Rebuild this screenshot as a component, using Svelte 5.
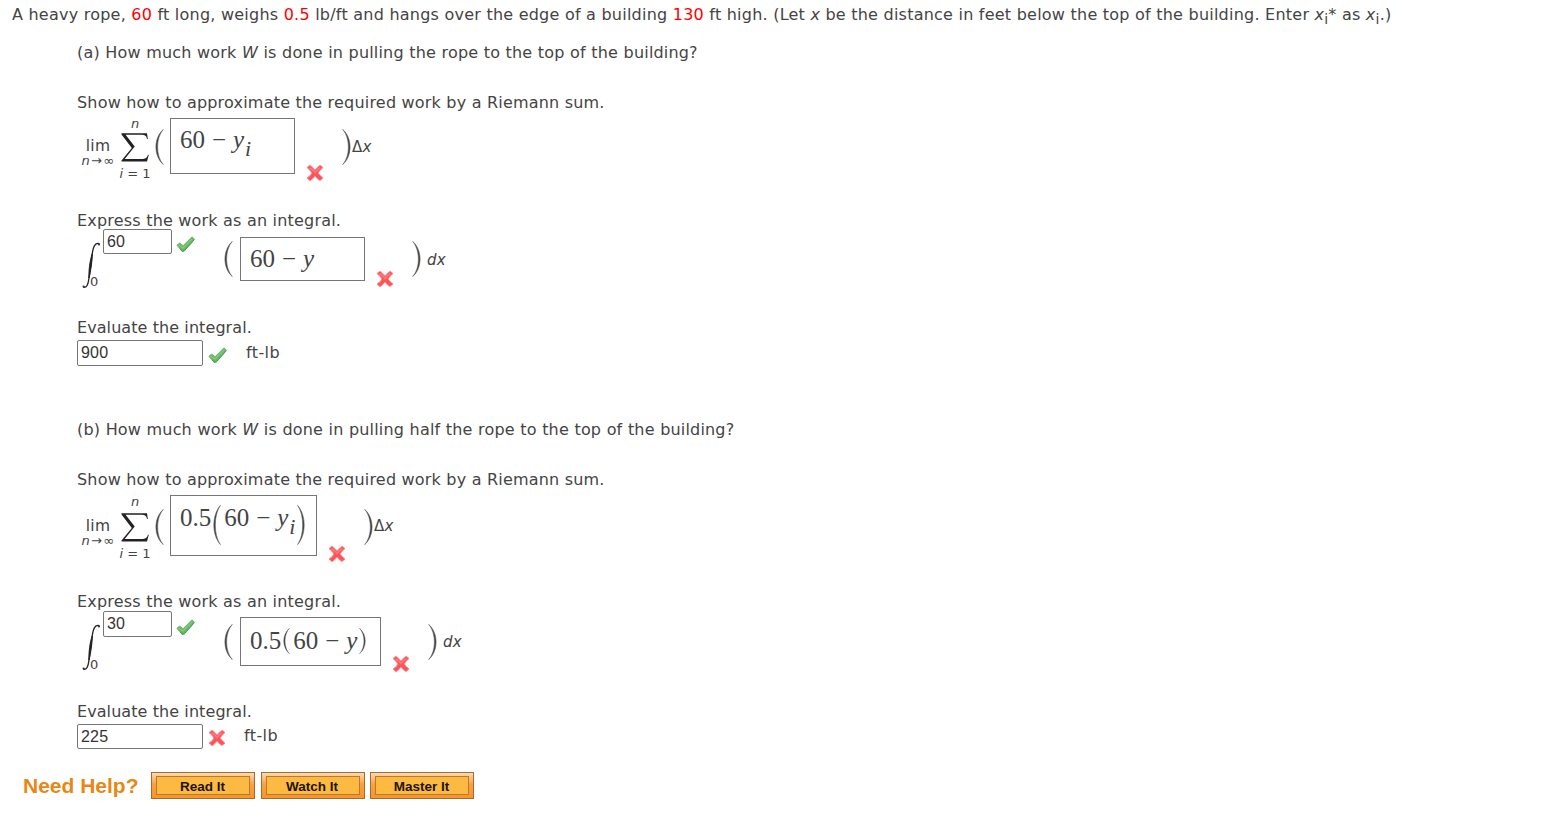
<script>
  const helpLinks = ['Read It', 'Watch It', 'Master It']

  let upperA = $state('60')
  let workA = $state('900')
  let upperB = $state('30')
  let workB = $state('225')
</script>

{#snippet check()}
  <svg class="check" width="20" height="17" viewBox="0 0 20 17" role="img" aria-label="Correct">
    <path d="M0.9 9.2 L3.8 7 L7 9.8 L15.9 0.9 L18.6 3.2 L8.4 15 L6 15.4 Z" fill="#68b966" stroke="#5fae5d" stroke-width="0.8" stroke-linejoin="round" />
    <path d="M2.6 9 L7 12 L16.2 2.8" fill="none" stroke="#85cb7d" stroke-width="1.2" />
    <path d="M4.2 13.2 L6.8 15.3 L8.4 14.6 L18.2 3.8" fill="none" stroke="#4b9450" stroke-width="0.9" />
  </svg>
{/snippet}

{#snippet cross()}
  <svg class="cross" width="18" height="18" viewBox="0 0 18 18" role="img" aria-label="Incorrect">
    <path d="M1 3.6 L3.8 1.2 Q7 3 9 6 Q11 3 14.2 1.2 L17 3.6 Q14 6 12 9 Q14 11.5 17 14 L14 16.6 Q11 15 9 12 Q7 15 4 16.8 L1 14 Q4.4 12 6 9 Q4 6 1 3.6 Z" fill="#fb5459" stroke="#fc8a8c" stroke-width="0.9" stroke-linejoin="round" />
    <path d="M3.6 3.6 Q7 5.6 9 8.4 Q11 5.6 14.2 3.6" fill="none" stroke="#ff7678" stroke-width="1.8" />
  </svg>
{/snippet}

{#snippet paren(side, height, width)}
  <svg class="paren" {width} {height} viewBox="0 0 9 36" preserveAspectRatio="none" aria-label={side === 'left' ? '(' : ')'}>
    <path
      d="M8.4 0.3 C-1.6 9 -1.6 27 8.4 35.7 C0.7 27 0.7 9 8.4 0.3 Z"
      transform={side === 'left' ? undefined : 'translate(9 0) scale(-1 1)'}
      fill="#444"
      stroke="#555"
      stroke-width="0.5"
    />
  </svg>
{/snippet}

{#snippet limitSum()}
  <div class="limit">
    <span class="lim">lim</span>
    <span class="under"><i>n</i>→∞</span>
  </div>
  <div class="sum">
    <span class="top"><i>n</i></span>
    <svg width="28" height="29" viewBox="0 0 28 29" aria-label="sum">
      <path d="M0.5 0.3 H26 L26.8 6 H26 C25.5 2.8 24 1.7 20 1.7 H4.6 L13.7 13.5 L3.7 26 H20.5 C24.5 26 26 24.8 27 21.8 H27.8 L26 28.5 H0.5 V27.5 L10.8 15 L0.5 1.6 Z" fill="#222" />
    </svg>
    <span class="bottom"><i>i</i> = 1</span>
  </div>
{/snippet}

{#snippet integralSign()}
  <svg class="integral-sign" width="19" height="47" viewBox="0 0 19 47" aria-label="integral">
    <path d="M1.3 45 C5 46.5 6.2 42 7 36 L10.2 12 C11.2 4.5 13 0.5 17.3 1.6" fill="none" stroke="#222" stroke-width="1.3" />
    <path d="M7 36 C8.6 30 10.4 18 10.2 12 C8 18 6.6 28 7 36 Z" fill="#222" stroke="#222" />
    <circle cx="17" cy="2.4" r="1.1" fill="#333" />
    <circle cx="1.6" cy="44.6" r="1.1" fill="#333" />
  </svg>
{/snippet}

<main>
  <p class="intro">
    A heavy rope, <b>60</b> ft long, weighs <b>0.5</b> lb/ft and hangs over the edge of a building <b>130</b> ft high. (Let <i>x</i> be the distance in feet below the top of the building. Enter <i>x</i><span class="sub">i</span>* as <i>x</i><span class="sub">i</span>.)
  </p>

  <section class="part-a">
    <p class="question">(a) How much work <i>W</i> is done in pulling the rope to the top of the building?</p>

    <p class="riemann">Show how to approximate the required work by a Riemann sum.</p>
    <div class="row sum-row">
      {@render limitSum()}
      {@render paren('left', 36, 9)}
      <div class="answer">
        <span>60</span><span class="minus">−</span><i>y</i><i class="index">i</i>
      </div>
      {@render cross()}
      {@render paren('right', 36, 9)}
      <span class="delta">Δ<i>x</i></span>
    </div>

    <p>Express the work as an integral.</p>
    <div class="row integral-row">
      {@render integralSign()}
      <span class="lower">0</span>
      <input class="bound" aria-label="Upper bound" bind:value={upperA} />
      {@render check()}
      {@render paren('left', 36, 9)}
      <div class="answer">
        <span>60</span><span class="minus">−</span><i>y</i>
      </div>
      {@render cross()}
      {@render paren('right', 36, 9)}
      <i class="dx">dx</i>
    </div>

    <p class="evaluate">Evaluate the integral.</p>
    <div class="row result">
      <input aria-label="Work" bind:value={workA} />
      {@render check()}
      <span class="unit">ft-lb</span>
    </div>
  </section>

  <section class="part-b">
    <p class="question">(b) How much work <i>W</i> is done in pulling half the rope to the top of the building?</p>

    <p class="riemann">Show how to approximate the required work by a Riemann sum.</p>
    <div class="row sum-row">
      {@render limitSum()}
      {@render paren('left', 36, 9)}
      <div class="answer">
        <span>0.5</span>{@render paren('left', 40, 8)}<span>60</span><span class="minus">−</span><i>y</i><i class="index">i</i>{@render paren('right', 40, 8)}
      </div>
      {@render cross()}
      {@render paren('right', 36, 9)}
      <span class="delta">Δ<i>x</i></span>
    </div>

    <p>Express the work as an integral.</p>
    <div class="row integral-row">
      {@render integralSign()}
      <span class="lower">0</span>
      <input class="bound" aria-label="Upper bound" bind:value={upperB} />
      {@render check()}
      {@render paren('left', 36, 9)}
      <div class="answer">
        <span>0.5</span>{@render paren('left', 26, 7)}<span>60</span><span class="minus">−</span><i>y</i>{@render paren('right', 26, 7)}
      </div>
      {@render cross()}
      {@render paren('right', 36, 9)}
      <i class="dx">dx</i>
    </div>

    <p class="evaluate">Evaluate the integral.</p>
    <div class="row result">
      <input aria-label="Work" bind:value={workB} />
      {@render cross()}
      <span class="unit">ft-lb</span>
    </div>
  </section>

  <footer>
    <strong>Need Help?</strong>
    {#each helpLinks as label}
      <button><span>{label}</span></button>
    {/each}
  </footer>
</main>

<style>
  :global(body) {
    margin: 0;
    background: #fff;
  }

  main {
    box-sizing: border-box;
    height: 821px;
    padding-top: 2px;
    overflow: hidden;
    color: #444;
    font: 16px/24px Verdana, 'DejaVu Sans', sans-serif;
    white-space: nowrap;
  }

  p {
    margin: 0;
    height: 24px;
    letter-spacing: 0.2px;
    line-height: 26px;
  }

  .intro {
    padding-left: 12px;
    letter-spacing: 0.233px;
  }

  .intro b {
    color: #f00;
    font-weight: normal;
  }

  .sub {
    position: relative;
    top: 4px;
    font-size: 14px;
    line-height: 1;
  }

  section {
    box-sizing: border-box;
    padding-left: 77px;
  }

  .part-a {
    height: 391px;
    padding-top: 14px;
  }

  .part-b {
    height: 355px;
  }

  .question {
    letter-spacing: 0.18px;
    word-spacing: 0.2px;
  }

  .riemann {
    margin-top: 26px;
  }

  .evaluate {
    letter-spacing: 0.08px;
  }

  .row {
    display: flex;
    align-items: center;
  }

  .row svg {
    display: block;
    flex: none;
  }

  .answer {
    box-sizing: border-box;
    display: flex;
    align-items: center;
    flex: none;
    border: 1px solid #767676;
    padding-left: 9px;
    color: #444;
    font: 25px/30px 'Liberation Serif', serif;
  }

  .minus {
    width: 15px;
    margin: 0 6px 0 7px;
  }

  .index {
    position: relative;
    top: 9px;
    margin-left: 1px;
    font-size: 22px;
  }

  .sum-row {
    height: 56px;
    margin: 4px 0 34px;
  }

  .part-b .sum-row {
    height: 61px;
    margin-bottom: 33px;
  }

  .sum-row > .paren {
    margin-top: 2px;
  }

  .limit {
    display: flex;
    flex-direction: column;
    align-items: center;
    width: 38px;
    margin: 12px 0 0 2px;
  }

  .lim {
    font-size: 15.5px;
    letter-spacing: 0.3px;
    line-height: 18px;
  }

  .under {
    margin-right: -1px;
    font-size: 13px;
    letter-spacing: 1.3px;
    line-height: 12px;
  }

  .sum {
    display: flex;
    flex-direction: column;
    align-items: center;
    width: 34px;
    margin: 1px 3px 0 1px;
    font-size: 13px;
  }

  .sum .top {
    height: 18px;
    line-height: 17px;
  }

  .part-b .sum .top {
    line-height: 14px;
  }

  .sum .bottom {
    height: 16px;
    line-height: 24px;
  }

  .sum-row .answer {
    align-self: stretch;
    width: 125px;
    margin-left: 6px;
    padding-bottom: 12px;
  }

  .part-b .sum-row .answer {
    width: 147px;
    padding-bottom: 15px;
  }

  .part-b .sum-row .answer .paren {
    margin: 14px 3px 0 2px;
  }

  .part-b .integral-row .answer .paren {
    margin: 0 3px 0 2px;
  }

  .row > .cross {
    align-self: flex-end;
    margin: 0 18px -8px 11px;
  }

  .part-b .sum-row > .cross,
  .integral-row > .cross {
    margin-bottom: -7px;
  }

  .delta,
  .dx {
    padding-top: 1px;
    font-size: 15px;
    letter-spacing: 0.2px;
  }

  .delta {
    margin-left: 1px;
  }

  .dx {
    margin-left: 6px;
  }

  .integral-row {
    height: 44px;
    margin: 5px 0 34px;
  }

  .part-b .integral-row {
    height: 49px;
    margin: 4px 0 33px;
  }

  .integral-sign {
    margin: 12px 0 0 5px;
  }

  .lower {
    width: 9px;
    margin: 46px 0 0 -11px;
    font-size: 13px;
  }

  input {
    box-sizing: border-box;
    width: 126px;
    height: 26px;
    border: 1px solid #767676;
    border-radius: 2px;
    padding: 0 3px;
    color: #333;
    font: 16px 'Liberation Sans', Arial, sans-serif;
    letter-spacing: 0.2px;
    outline: none;
  }

  .bound {
    width: 69px;
    height: 25px;
    margin: -35px 0 0 4px;
  }

  .part-b .bound {
    height: 26px;
  }

  .integral-row > .check {
    margin: -29px 28px 0 4px;
  }

  .integral-row .answer {
    align-self: stretch;
    width: 125px;
    margin-left: 7px;
  }

  .part-b .integral-row .answer {
    width: 141px;
    padding-bottom: 2px;
  }

  .result {
    margin-top: 1px;
  }

  .part-b .result {
    margin-top: 0;
  }

  .part-b .result input {
    height: 25px;
    margin-top: 1px;
  }

  .result .check {
    margin: 4px 18px 0 5px;
  }

  .row.result > .cross {
    align-self: center;
    margin: 4px 18px 0 5px;
  }

  .unit {
    letter-spacing: 0.4px;
  }

  footer {
    display: flex;
    align-items: center;
    height: 27px;
    padding-left: 23px;
  }

  footer strong {
    width: 128px;
    margin-top: -1px;
    color: #e88714;
    font: bold 21px/27px 'Liberation Sans', Arial, sans-serif;
  }

  button {
    box-sizing: border-box;
    width: 104px;
    height: 27px;
    margin-right: 5.5px;
    padding: 3px 4px;
    border: 1px solid #a66b31;
    background: linear-gradient(#fbd9ae, #f9a044 45%, #f7942d);
  }

  button span {
    box-sizing: border-box;
    display: block;
    height: 19px;
    border: 1px solid #bb792c;
    padding-right: 1px;
    background: #fdba43;
    color: #1c1404;
    font: bold 13.5px/19px 'Liberation Sans', Arial, sans-serif;
  }
</style>
